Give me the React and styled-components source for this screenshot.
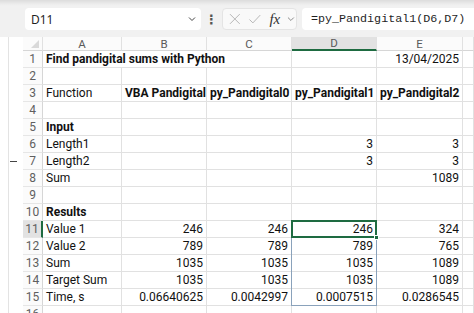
import React from 'react'
import styled, { createGlobalStyle } from 'styled-components'

const GlobalStyle = createGlobalStyle`
  html, body { margin: 0; padding: 0; background: #fff; }
  body { width: 474px; height: 313px; overflow: hidden; }
`

const cols = ['A', 'B', 'C', 'D', 'E', '']
const colWidths = '23px 20px 79px 85px 85px 85px 86px 1fr'

// one entry per sheet row, columns A..E
const rows = [
  { a: 'Find pandigital sums with Python', bold: true, span: 3, e: '13/04/2025' },
  {},
  { a: 'Function', b: 'VBA Pandigital', c: 'py_Pandigital0', d: 'py_Pandigital1', e: 'py_Pandigital2', head: true },
  {},
  { a: 'Input', bold: true },
  { a: 'Length1', d: '3', e: '3' },
  { a: 'Length2', d: '3', e: '3' },
  { a: 'Sum', e: '1089' },
  {},
  { a: 'Results', bold: true },
  { a: 'Value 1', b: '246', c: '246', d: '246', e: '324' },
  { a: 'Value 2', b: '789', c: '789', d: '789', e: '765' },
  { a: 'Sum', b: '1035', c: '1035', d: '1035', e: '1089' },
  { a: 'Target Sum', b: '1035', c: '1035', d: '1035', e: '1089' },
  { a: 'Time, s', b: '0.06640625', c: '0.0042997', d: '0.0007515', e: '0.0286545' },
  {},
]

const Page = styled.div`
  width: 474px;
  height: 313px;
  background: #fff;
  overflow: hidden;
`

const Toolbar = styled.div`
  height: 37px;
  box-sizing: border-box;
  padding: 8px 0 7px 25px;
  display: flex;
  align-items: stretch;
  background: linear-gradient(#dcdcdc 0, #ececec 4px, #f1f1f1 6px);
`

const NameBox = styled.div`
  width: 176px;
  box-sizing: border-box;
  background: #fff;
  border-radius: 4px;
  display: flex;
  align-items: center;
  justify-content: space-between;
  padding: 0 4px 0 6px;
  font-family: "Noto Sans", sans-serif;
  font-size: 12px;
  color: #1f1f1f;
`

const Dots = styled.div`
  width: 21px;
  display: flex;
  align-items: center;
  justify-content: center;
  color: #555;
  font-family: "DejaVu Sans", sans-serif;
  font-size: 13px;
  font-weight: bold;
`

const IconBox = styled.div`
  width: 75px;
  box-sizing: border-box;
  background: #f9f9f9;
  border: 1px solid #e4e4e4;
  border-radius: 4px;
  display: flex;
  align-items: center;
  padding-left: 5px;
  gap: 6px;
`

const Fx = styled.span`
  font-family: "Liberation Serif", serif;
  font-style: italic;
  font-size: 15px;
  color: #333;
  margin-left: 2px;
`

const FormulaBox = styled.div`
  flex: 1;
  margin-left: 5px;
  background: #fff;
  border-radius: 4px 0 0 4px;
  display: flex;
  align-items: center;
  padding-left: 9px;
  font-family: "Liberation Mono", monospace;
  font-size: 11.7px;
  color: #1f1f1f;
  white-space: nowrap;
`

const Sheet = styled.div`
  display: grid;
  grid-template-columns: ${colWidths};
  grid-template-rows: 14px repeat(16, 17px);
  font-family: Roboto, sans-serif;
  font-size: 12px;
  color: #111;
`

const Gutter = styled.div`
  grid-column: 1;
  grid-row: ${p => p.$row};
  border-left: 1px solid #e3e3e3;
  margin-left: 8px;
  display: flex;
  align-items: center;
  &::after {
    content: '';
    display: ${p => (p.$dash ? 'block' : 'none')};
    width: 7px;
    height: 1px;
    margin-left: 1px;
    background: #444;
  }
`

const Corner = styled.div`
  grid-column: 2;
  grid-row: 1;
  background: #fbfbfb;
  border-right: 1px solid #e1e1e1;
  border-bottom: 1px solid #d6d6d6;
  display: flex;
  align-items: flex-end;
  justify-content: flex-end;
  padding: 0 3px 2px 0;
`

const ColHead = styled.div`
  grid-column: ${p => p.$col};
  grid-row: 1;
  background: ${p => (p.$active ? '#e2e2e2' : '#fbfbfb')};
  border-right: 1px solid #e1e1e1;
  border-bottom: ${p => (p.$active ? '2px solid #1e6b41' : '1px solid #d6d6d6')};
  display: flex;
  align-items: center;
  justify-content: center;
  color: #5a5a5a;
  font-size: 11.5px;
`

const RowHead = styled.div`
  grid-column: 2;
  grid-row: ${p => p.$row};
  background: ${p => (p.$active ? '#e2e2e2' : '#fbfbfb')};
  border-right: ${p => (p.$active ? '2px solid #1e6b41' : '1px solid #d6d6d6')};
  border-bottom: 1px solid #e6e6e6;
  display: flex;
  align-items: flex-end;
  justify-content: center;
  padding-bottom: 1px;
  color: #5f5f5f;
  font-size: 12px;
`

const Cell = styled.div`
  grid-column: ${p => p.$col} / span ${p => p.$span || 1};
  grid-row: ${p => p.$row};
  border-right: 1px solid #e1e1e1;
  border-bottom: 1px solid #e1e1e1;
  display: flex;
  align-items: flex-end;
  justify-content: ${p => (p.$right ? 'flex-end' : 'flex-start')};
  padding: 0 3px 1px;
  font-weight: ${p => (p.$bold ? 700 : 400)};
  white-space: nowrap;
  min-width: 0;
`

// D11:D15 reference outline and active cell D11 (sheet column D = grid column 6)
const Range = styled.div`
  grid-column: 6;
  grid-row: 12 / 17;
  margin: -1px 0 0 -1px;
  border: 1px solid #8aa2bb;
  pointer-events: none;
`

const Active = styled.div`
  grid-column: 6;
  grid-row: 12;
  position: relative;
  margin: -1px 0 0 -1px;
  border: 2px solid #1e6b41;
  pointer-events: none;
  &::after {
    content: '';
    position: absolute;
    right: -4px;
    bottom: -4px;
    width: 5px;
    height: 5px;
    background: #1e6b41;
    border: 1px solid #fff;
    box-sizing: border-box;
  }
`

const isNum = v => /^[0-9.]+$/.test(v) || /^\d+\/\d+\/\d+$/.test(v)

const Chevron = ({ color = '#444' }) => (
  <svg width="10" height="10" viewBox="0 0 10 10">
    <path d="M2 3.5 L5 6.5 L8 3.5" fill="none" stroke={color} strokeWidth="1" />
  </svg>
)

const App = () => {
  const cells = []
  cells.push(<Gutter key="g0" $row={1} />)
  cells.push(
    <Corner key="corner">
      <svg width="8" height="8" viewBox="0 0 8 8">
        <path d="M8 0 L8 8 L0 8 Z" fill="#d9d9d9" />
      </svg>
    </Corner>
  )
  cols.forEach((c, i) =>
    cells.push(<ColHead key={'h' + i} $col={i + 3} $active={c === 'D'}>{c}</ColHead>)
  )

  rows.forEach((r, i) => {
    const n = i + 1
    const gr = n + 1
    cells.push(<Gutter key={'g' + n} $row={gr} $dash={n === 7} />)
    cells.push(<RowHead key={'r' + n} $row={gr} $active={n === 11}>{n}</RowHead>)
    const vals = [r.a, r.b, r.c, r.d, r.e]
    const span = r.span || 1
    vals.forEach((v, j) => {
      if (j > 0 && j < span) return
      const bold = (j === 0 && r.bold) || (r.head && j > 0)
      cells.push(
        <Cell
          key={n + '-' + j}
          $row={gr}
          $col={j + 3}
          $span={j === 0 ? span : 1}
          $bold={bold}
          $right={v && isNum(v)}
        >
          {v}
        </Cell>
      )
    })
    cells.push(<Cell key={n + '-f'} $row={gr} $col={8} />)
  })

  return (
    <Page>
      <GlobalStyle />
      <Toolbar>
        <NameBox>
          <span>D11</span>
          <Chevron />
        </NameBox>
        <Dots>⋮</Dots>
        <IconBox>
          <svg width="14" height="14" viewBox="0 0 14 14">
            <path d="M2 2 L12 12 M12 2 L2 12" stroke="#b5b5b5" strokeWidth="1" />
          </svg>
          <svg width="14" height="14" viewBox="0 0 14 14">
            <path d="M1.5 7.5 L5 11 L12.5 3" fill="none" stroke="#b5b5b5" strokeWidth="1" />
          </svg>
          <Fx>fx</Fx>
          <Chevron color="#888" />
        </IconBox>
        <FormulaBox>=py_Pandigital1(D6,D7)</FormulaBox>
      </Toolbar>
      <Sheet>
        {cells}
        <Range />
        <Active />
      </Sheet>
    </Page>
  )
}

export default App
